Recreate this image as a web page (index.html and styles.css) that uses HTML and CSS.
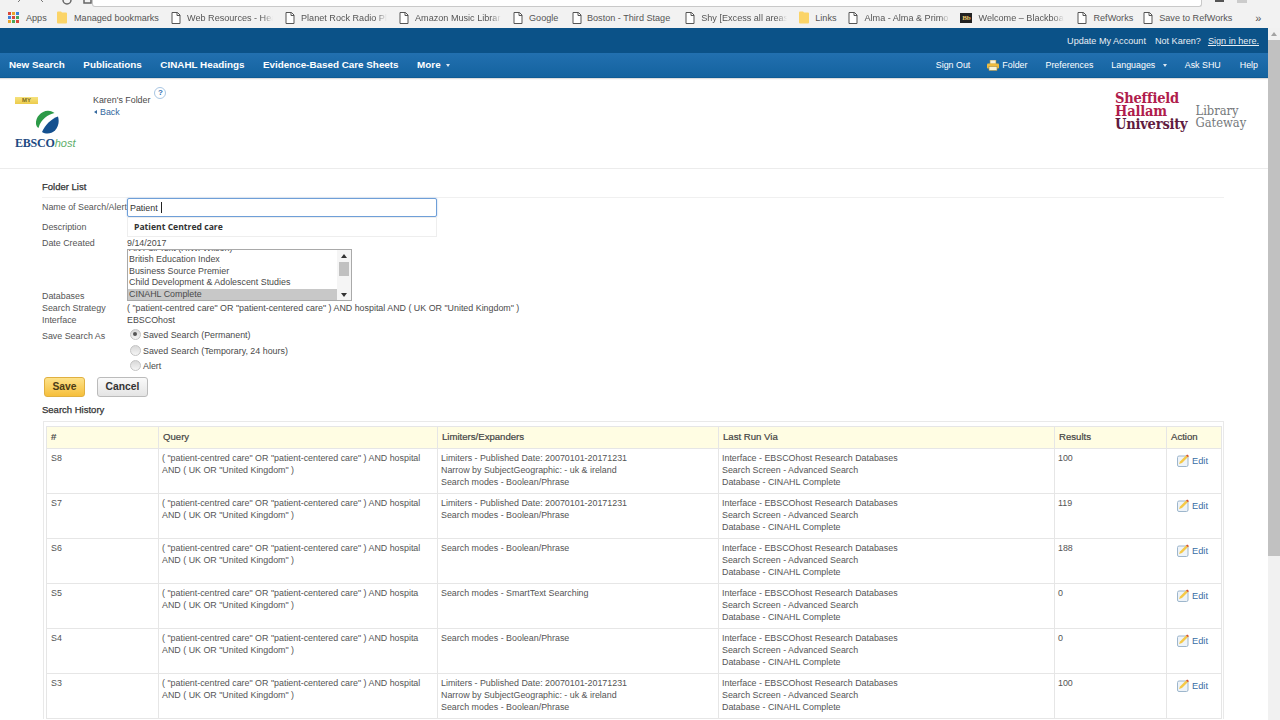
FILE: index.html
```html
<!DOCTYPE html>
<html lang="en">
<head>
<meta charset="utf-8">
<title>Karen's Folder</title>
<link rel="stylesheet" href="styles.css">
</head>
<body>
<svg class="defs" width="0" height="0" aria-hidden="true">
  <symbol id="file" viewBox="0 0 10 12"><path d="M1 .5h5.500L9 3v8.500H1z" fill="#fff" stroke="#555"/><path d="M6 .5V3.500h3" fill="none" stroke="#555"/></symbol>
  <symbol id="fold" viewBox="0 0 10 13"><path d="M0 1.500a1 1 0 0 1 1-1h3l1 1h4a1 1 0 0 1 1 1v9a1 1 0 0 1-1 1H1a1 1 0 0 1-1-1z" fill="#fbd468"/></symbol>
  <symbol id="edit" viewBox="0 0 13 13"><rect x=".5" y="2" width="10.500" height="10.500" rx="1.500" fill="#eef3f8" stroke="#9db6cc"/><path d="M2 10l1-2.500 6-6 2 1.500-6 6z" fill="#f5c948"/><path d="M9 1.500l1.200-1 1.800 1.500-1 1.200z" fill="#d9532c"/></symbol>
</svg>
<div class="screen">
  <div class="browser">
    <div class="toolbar">
      <svg class="tb-icons" width="82" height="7" viewBox="0 0 82 7"><path d="M10 0l-2 2M31 0l2 2" stroke="#777" fill="none"/><path d="M53 0a4 4 0 0 0 8 0" stroke="#666" stroke-width="1.500" fill="none"/><path d="M74 0v3h7V0" stroke="#666" stroke-width="1.500" fill="none"/></svg>
      <div class="address"></div>
      <div class="tb-end"><span class="tb-dark"></span><span class="tb-pale"></span></div>
    </div>
    <div class="bookmarks">
      <svg class="apps" width="11" height="11" viewBox="0 0 11 11"><g fill="#d8473a"><rect width="3" height="3"/><rect x="4" width="3" height="3" fill="#e9a52c"/><rect x="8" width="3" height="3" fill="#3f7fd9"/><rect y="4" width="3" height="3" fill="#3f7fd9"/><rect x="4" y="4" width="3" height="3"/><rect x="8" y="4" width="3" height="3" fill="#4aa65a"/><rect y="8" width="3" height="3" fill="#e9a52c"/><rect x="4" y="8" width="3" height="3" fill="#4aa65a"/><rect x="8" y="8" width="3" height="3"/></g></svg>
      <span class="bm-apps">Apps</span>
      <svg class="bm-f" width="10" height="13"><use href="#fold"/></svg><span class="bm-t wide">Managed bookmarks</span>
      <svg class="bm-i" width="10" height="12"><use href="#file"/></svg><span class="bm-t fade">Web Resources - Hea</span>
      <svg class="bm-i" width="10" height="12"><use href="#file"/></svg><span class="bm-t fade">Planet Rock Radio Pla</span>
      <svg class="bm-i" width="10" height="12"><use href="#file"/></svg><span class="bm-t fade">Amazon Music Librar</span>
      <svg class="bm-i" width="10" height="12"><use href="#file"/></svg><span class="bm-t google">Google</span>
      <svg class="bm-i tight" width="10" height="12"><use href="#file"/></svg><span class="bm-t boston">Boston - Third Stage</span>
      <svg class="bm-i" width="10" height="12"><use href="#file"/></svg><span class="bm-t fade">Shy [Excess all areas -</span>
      <svg class="bm-f links" width="10" height="13"><use href="#fold"/></svg><span class="bm-t">Links</span>
      <svg class="bm-i" width="10" height="12"><use href="#file"/></svg><span class="bm-t fade pre-bb">Alma - Alma &amp; Primo</span>
      <span class="bb">Bb</span><span class="bm-t fade bbt">Welcome – Blackboar</span>
      <svg class="bm-i" width="10" height="12"><use href="#file"/></svg><span class="bm-t refw">RefWorks</span>
      <svg class="bm-i" width="10" height="12"><use href="#file"/></svg><span class="bm-t">Save to RefWorks</span>
      <span class="chev">»</span>
    </div>
  </div>
  <div class="viewport">
    <div class="page">
      <div class="topbar">
        <span>Update My Account</span><span>Not Karen?</span><a class="signin">Sign in here.</a>
      </div>
      <nav class="navbar">
        <div class="nav-left">
          <a>New Search</a><a>Publications</a><a>CINAHL Headings</a><a>Evidence-Based Care Sheets</a><a>More <i class="caret"></i></a>
        </div>
        <div class="nav-right">
          <a class="signout">Sign Out</a>
          <a class="nav-folder"><svg width="12" height="11" viewBox="0 0 12 11"><rect x="3" y="0" width="6" height="4" fill="#f6f2df" stroke="#a98d3c" stroke-width=".6"/><rect x="0" y="3.500" width="12" height="5" rx="1" fill="#eebc3f"/><rect x="2" y="6.500" width="8" height="4" fill="#f9f4d8" stroke="#a98d3c" stroke-width=".6"/></svg>Folder</a>
          <a>Preferences</a><a>Languages <i class="caret lang"></i></a><a class="ask">Ask SHU</a><a>Help</a>
        </div>
      </nav>
      <header class="brand">
        <div class="ebsco">
          <span class="my">MY</span>
          <svg class="globe" width="24" height="24" viewBox="0 0 24 24"><path d="M1 14C.5 7 6 1 13 .7c3 0 5 1 6.500 2.300C13 4.500 6 9 3.500 18 2 17 1.200 15.500 1 14z" fill="#2c9a48"/><path d="M7 22c3-7 9-13 16-15.500 1.500 5 .5 10-3 14-3.500 3.500-9 4-13 1.500z" fill="#14508f"/></svg>
          <span class="ebsco-name">EBSCO<em>host</em></span>
        </div>
        <div class="folder-title">
          <div class="title-line">Karen's Folder<span class="help">?</span></div>
          <a class="back"><i class="back-arrow"></i>Back</a>
        </div>
        <div class="shu">
          <div class="shu-name"><span>Sheffield</span><span>Hallam</span><span class="dark">University</span></div>
          <div class="shu-lib"><span>Library</span><span>Gateway</span></div>
        </div>
      </header>
      <main class="content">
        <h2 class="section first">Folder List</h2>
        <div class="form">
          <label class="row-name">Name of Search/Alert</label>
          <div class="field">
            <div class="input">Patient <i class="cursor"></i></div>
            <div class="suggest">Patient Centred care</div>
          </div>
          <label>Description</label><div></div>
          <label class="end">Date Created</label><div class="end">9/14/2017</div>
          <label class="bottom">Databases</label>
          <div class="listbox">
            <div class="options">
              <div>Art Full Text (H.W. Wilson)</div>
              <div>British Education Index</div>
              <div>Business Source Premier</div>
              <div>Child Development &amp; Adolescent Studies</div>
              <div class="selected">CINAHL Complete</div>
            </div>
            <div class="lb-scroll"><i class="up"></i><i class="thumb"></i><i class="down"></i></div>
          </div>
          <label>Search Strategy</label><div>( "patient-centred care" OR "patient-centered care" ) AND hospital AND ( UK OR "United Kingdom" )</div>
          <label>Interface</label><div>EBSCOhost</div>
          <label class="top">Save Search As</label>
          <div class="radios">
            <div class="radio on">Saved Search (Permanent)</div>
            <div class="radio">Saved Search (Temporary, 24 hours)</div>
            <div class="radio">Alert</div>
          </div>
        </div>
        <div class="buttons"><button class="btn save">Save</button><button class="btn">Cancel</button></div>
        <h2 class="section history">Search History</h2>
        <div class="table-wrap">
          <table>
            <colgroup><col class="c1"><col class="c2"><col class="c3"><col class="c4"><col class="c5"><col class="c6"></colgroup>
            <thead><tr><th>#</th><th>Query</th><th>Limiters/Expanders</th><th>Last Run Via</th><th>Results</th><th>Action</th></tr></thead>
            <tbody>
              <tr><td>S8</td><td>( "patient-centred care" OR "patient-centered care" ) AND hospital<br>AND ( UK OR "United Kingdom" )</td><td>Limiters - Published Date: 20070101-20171231<br>Narrow by SubjectGeographic: - uk &amp; ireland<br>Search modes - Boolean/Phrase</td><td>Interface - EBSCOhost Research Databases<br>Search Screen - Advanced Search<br>Database - CINAHL Complete</td><td>100</td><td class="act"><a><svg width="13" height="13"><use href="#edit"/></svg>Edit</a></td></tr>
              <tr><td>S7</td><td>( "patient-centred care" OR "patient-centered care" ) AND hospital<br>AND ( UK OR "United Kingdom" )</td><td>Limiters - Published Date: 20070101-20171231<br>Search modes - Boolean/Phrase</td><td>Interface - EBSCOhost Research Databases<br>Search Screen - Advanced Search<br>Database - CINAHL Complete</td><td>119</td><td class="act"><a><svg width="13" height="13"><use href="#edit"/></svg>Edit</a></td></tr>
              <tr><td>S6</td><td>( "patient-centred care" OR "patient-centered care" ) AND hospital<br>AND ( UK OR "United Kingdom" )</td><td>Search modes - Boolean/Phrase</td><td>Interface - EBSCOhost Research Databases<br>Search Screen - Advanced Search<br>Database - CINAHL Complete</td><td>188</td><td class="act"><a><svg width="13" height="13"><use href="#edit"/></svg>Edit</a></td></tr>
              <tr><td>S5</td><td>( "patient-centred care" OR "patient-centered care" ) AND hospita<br>AND ( UK OR "United Kingdom" )</td><td>Search modes - SmartText Searching</td><td>Interface - EBSCOhost Research Databases<br>Search Screen - Advanced Search<br>Database - CINAHL Complete</td><td>0</td><td class="act"><a><svg width="13" height="13"><use href="#edit"/></svg>Edit</a></td></tr>
              <tr><td>S4</td><td>( "patient-centred care" OR "patient-centered care" ) AND hospita<br>AND ( UK OR "United Kingdom" )</td><td>Search modes - Boolean/Phrase</td><td>Interface - EBSCOhost Research Databases<br>Search Screen - Advanced Search<br>Database - CINAHL Complete</td><td>0</td><td class="act"><a><svg width="13" height="13"><use href="#edit"/></svg>Edit</a></td></tr>
              <tr><td>S3</td><td>( "patient-centred care" OR "patient-centered care" ) AND hospital<br>AND ( UK OR "United Kingdom" )</td><td>Limiters - Published Date: 20070101-20171231<br>Narrow by SubjectGeographic: - uk &amp; ireland<br>Search modes - Boolean/Phrase</td><td>Interface - EBSCOhost Research Databases<br>Search Screen - Advanced Search<br>Database - CINAHL Complete</td><td>100</td><td class="act"><a><svg width="13" height="13"><use href="#edit"/></svg>Edit</a></td></tr>
            </tbody>
          </table>
        </div>
      </main>
    </div>
    <div class="scrollbar"><i class="sb-up"></i><i class="sb-thumb"></i></div>
  </div>
</div>
</body>
</html>
```
FILE: styles.css
```css
* { box-sizing: border-box; }
html, body { margin: 0; height: 720px; overflow: hidden; }
body { font: 8.900px/12px "Liberation Sans", Arial, sans-serif; color: #4a4a4a; background: #fff; }
a { color: inherit; text-decoration: none; }
i { display: block; font-style: normal; }
.defs { position: absolute; }
.screen { display: flex; flex-direction: column; width: 1280px; height: 720px; }

.browser { flex: none; height: 28px; background: #f2f2f2; display: flex; flex-direction: column; }
.toolbar { height: 7px; display: flex; padding-left: 10px; overflow: hidden; }
.tb-icons { flex: none; }
.address { width: 1110px; height: 7px; background: #fff; border: 1px solid #c9c9c9; border-top: 0; border-radius: 0 0 3px 3px; }
.tb-end { display: flex; gap: 13px; margin-left: 13px; }
.tb-dark { width: 9px; height: 2px; background: #555; }
.tb-pale { width: 10px; height: 3px; background: #ccc; }

.bookmarks { height: 21px; display: flex; align-items: center; padding-left: 8px; font-size: 9.100px; color: #555; white-space: nowrap; }
.apps { flex: none; }
.bm-apps { margin-left: 7px; margin-right: 11px; width: 20px; }
.bm-i { flex: none; margin-right: 6px; }
.bm-f { flex: none; margin-right: 7px; }
.bm-t { flex: none; margin-right: 12px; }
.wide { width: 85px; }
.google { width: 31px; }
.fade { width: 86px; overflow: hidden; -webkit-mask-image: linear-gradient(90deg, #000 88%, transparent); mask-image: linear-gradient(90deg, #000 88%, transparent); }
.tight { margin-right: 5px; }
.boston { margin-right: 15px; }
.links { margin-right: 6px; }
.pre-bb { margin-right: 10px; }
.bbt { margin-right: 13px; }
.refw { margin-right: 10px; }
.bb { flex: none; width: 12px; height: 10px; margin-right: 6px; background: #222; color: #e9c86a; font: bold 7px/10px "Liberation Serif", serif; text-align: center; }
.chev { margin-left: 11px; font-size: 11px; }

.viewport { flex: 1; min-height: 0; display: flex; }
.page { flex: 1; min-width: 0; overflow: hidden; }
.scrollbar { flex: none; width: 12px; background: #f1f1f1; }
.sb-up { height: 12px; position: relative; }
.sb-up::after { content: ""; position: absolute; left: 3px; top: 4px; border: 3px solid transparent; border-top: 0; border-bottom: 4px solid #a3a3a3; }
.sb-thumb { height: 516px; background: #c1c1c1; }

.topbar { height: 25px; background: #0b5288; color: #e8eef4; display: flex; justify-content: flex-end; align-items: center; padding: 1px 9px 0 0; font-size: 9.100px; }
.topbar span { margin-right: 9px; }
.signin { text-decoration: underline; margin-left: -2px; }
.navbar { height: 25px; display: flex; justify-content: space-between; align-items: center; padding: 0 10px 0 9px; color: #fff; background: linear-gradient(#2270b0, #14639f); border-bottom: 1px solid #0f5b94; box-shadow: 0 1px 1px #ddd; }
.nav-left { display: flex; gap: 18.500px; font-weight: bold; font-size: 9.850px; }
.nav-right { display: flex; gap: 18px; font-size: 8.900px; align-items: center; }
.nav-folder { display: flex; align-items: center; gap: 3px; }
.signout { margin-right: -1px; }
.ask { margin-right: 1px; }
.caret { display: inline-block; margin-left: 3px; vertical-align: 1px; border: 2px solid transparent; border-top: 3px solid #dce8f2; border-bottom: 0; }
.lang { margin-left: 5px; }

.brand { height: 91px; display: flex; border-bottom: 1px solid #ececec; }
.ebsco { width: 93px; padding: 19px 0 0 15px; display: flex; flex-direction: column; }
.my { width: 23px; height: 7px; background: linear-gradient(#f6e27e, #eccb4b); font: bold 6px/7px "Liberation Sans", sans-serif; color: #7d6a1c; text-align: center; }
.globe { margin: 6px 0 0 20px; }
.ebsco-name { margin-top: 2px; font: bold 12px/14px "Liberation Serif", serif; color: #1d4a82; letter-spacing: -.2px; white-space: nowrap; }
.ebsco-name em { font: italic 11px "Liberation Sans", sans-serif; color: #5cae6a; letter-spacing: 0; }
.folder-title { flex: 1; padding-top: 9px; }
.title-line { display: flex; align-items: flex-start; height: 14px; padding-top: 7px; white-space: nowrap; line-height: 12px; }
.help { width: 12px; height: 12px; margin: -7px 0 0 4px; border: 1px solid #a9c6e3; border-radius: 50%; color: #2f6fb0; font: bold 8px/10px "Liberation Sans", sans-serif; text-align: center; }
.back { display: flex; align-items: center; margin-top: 5px; height: 12px; color: #33689e; }
.back-arrow { width: 0; margin: 0 3px 0 1px; border: 2.500px solid transparent; border-left: 0; border-right: 3px solid #33689e; }
.shu { flex: none; width: 153px; padding-top: 13px; display: flex; gap: 8px; }
.shu-name { display: flex; flex-direction: column; font: bold 14.500px/13px "DejaVu Serif Condensed", "Liberation Serif", serif; color: #b01c4c; letter-spacing: -.2px; }
.shu-name .dark { color: #5f1b40; }
.shu-lib { display: flex; flex-direction: column; padding-top: 14px; font: 12.800px/12px "DejaVu Serif Condensed", "Liberation Serif", serif; color: #74787a; }

.content { padding: 0 44px 0 42px; }
.section { margin: 0; font-size: 9.500px; line-height: 12px; font-weight: normal; color: #333; -webkit-text-stroke: .25px #333; }
.first { margin-top: 12px; padding-bottom: 4px; border-bottom: 1px solid #f0f0f0; }
.form { display: grid; grid-template-columns: 85px 1fr; grid-template-rows: 21px 16px 14px 53px 12px 12px 46px; align-items: center; white-space: nowrap; }
.form label { color: #555; }
.form .end { align-self: end; }
.form label.row-name { align-self: start; padding-top: 3px; }
.form label.bottom { align-self: end; }
.form label.top { align-self: start; padding-top: 4px; }
.field { position: relative; align-self: start; }
.input { width: 310px; height: 19px; padding: 0 2px; border: 1px solid #6f9fd8; border-radius: 2px; box-shadow: 0 0 2px #a8c6ea; display: flex; align-items: center; color: #333; background: #fff; }
.cursor { width: 1px; height: 11px; margin-left: 3px; background: #222; }
.suggest { position: absolute; left: 0; top: 19px; width: 310px; height: 20px; padding-left: 6px; background: #fff; border: 1px solid #eee; font: bold 8.600px/19px "Open Sans", "Liberation Sans", sans-serif; color: #333; z-index: 2; }
.listbox { width: 225px; height: 52px; border: 1px solid #a9a9a9; display: flex; align-self: start; }
.options { flex: 1; display: flex; flex-direction: column; justify-content: flex-end; overflow: hidden; }
.options div { flex: none; height: 11.500px; padding-left: 1px; line-height: 11.500px; }
.options .selected { background: #c8c8c8; }
.lb-scroll { flex: none; width: 14px; display: flex; flex-direction: column; align-items: center; background: #f5f5f5; }
.up, .down { border: 3px solid transparent; }
.up { border-top: 0; border-bottom: 4px solid #333; margin: 4px 0 3px; }
.down { margin-top: auto; border-bottom: 0; border-top: 4px solid #333; margin-bottom: 3px; }
.thumb { width: 10px; height: 14px; margin-top: 1px; background: #c1c1c1; }
.radios { align-self: start; display: flex; flex-direction: column; padding-top: 2px; }
.radio { height: 15.500px; margin-left: 3px; padding-left: 13px; position: relative; line-height: 15.500px; }
.radio::before { content: ""; position: absolute; left: 0; top: 1px; width: 9px; height: 9px; border: 1px solid #c4c4c4; border-radius: 50%; background: linear-gradient(#d8d8d8, #f5f5f5); }
.radio.on::after { content: ""; position: absolute; left: 2.500px; top: 3.500px; width: 4px; height: 4px; border-radius: 50%; background: #555; }

.buttons { display: flex; gap: 12px; padding-left: 2px; margin-top: 5px; }
.btn { height: 20px; width: 51px; padding: 0; border: 1px solid #bbb; border-radius: 3px; background: linear-gradient(#fafafa, #e4e4e4); font: bold 10.300px/18px "Liberation Sans", sans-serif; color: #333; }
.save { width: 41px; border-color: #e0b040; background: linear-gradient(#fde28a, #f6bf3b); color: #4b3d17; }
.history { margin-top: 7px; }
.table-wrap { margin: 5px 0 0 1px; padding: 4px 2px 0; border: 1px solid #e9e9e9; border-bottom: 0; }
table { width: 1175px; table-layout: fixed; border-collapse: collapse; }
.c1 { width: 112px; } .c2 { width: 279px; } .c3 { width: 281px; } .c4 { width: 336px; } .c5 { width: 112px; } .c6 { width: 55px; }
th { height: 22px; padding: 0 0 2px 4px; font-size: 9.600px; background: #fffde3; border: 1px solid #e6e6e6; text-align: left; font-weight: normal; color: #444; -webkit-text-stroke: .2px #444; }
td { height: 45px; padding: 3px 3px 0; border: 1px solid #e6e6e6; vertical-align: top; color: #555; white-space: nowrap; overflow: hidden; }
td:first-child { padding-left: 4px; }
.act { padding: 5px 0 0 10px; }
.act a { display: flex; align-items: center; gap: 2px; font-size: 9.300px; color: #3a6ea5; }
```
